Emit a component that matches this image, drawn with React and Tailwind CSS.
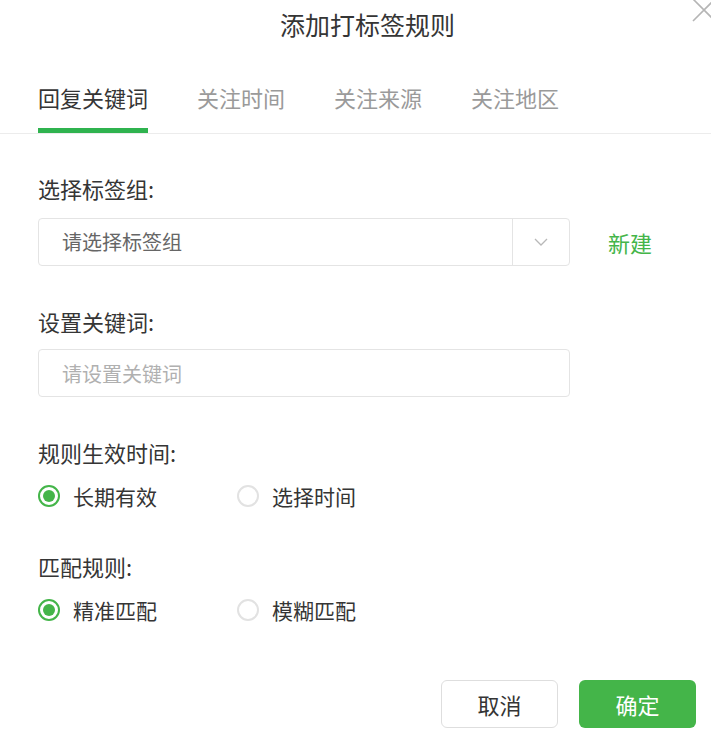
import React, { useState } from 'react';

const tabs = ['回复关键词', '关注时间', '关注来源', '关注地区'];

const Radio = ({ checked, label, onClick, className = '' }) => (
  <button type="button" onClick={onClick} className={`flex items-center gap-[13px] ${className}`}>
    {checked ? (
      <span className="w-[22px] h-[22px] rounded-full border-[2px] border-[#44b549] flex items-center justify-center">
        <span className="w-[12px] h-[12px] rounded-full bg-[#44b549]" />
      </span>
    ) : (
      <span className="w-[22px] h-[22px] rounded-full border-[2px] border-[#e2e2e2]" />
    )}
    <span className="text-[21px] leading-[30px] text-[#353535]">{label}</span>
  </button>
);

const FieldLabel = ({ children, className = '' }) => (
  <div className={`text-[22px] leading-[30px] text-[#353535] ${className}`}>{children}</div>
);

export default function App() {
  const [activeTab, setActiveTab] = useState(0);
  const [period, setPeriod] = useState('forever');
  const [match, setMatch] = useState('exact');

  return (
    <div
      className="relative w-[711px] h-[733px] overflow-hidden bg-white"
      style={{ fontFamily: '"Noto Sans CJK SC", "Noto Sans", sans-serif' }}
    >
      {/* close button, half cut off by the dialog edge */}
      <button type="button" className="absolute left-[692px] top-[-2px] text-[#b5b5b5]">
        <svg width="24" height="24" viewBox="0 0 24 24" fill="none" stroke="currentColor" strokeWidth="1.6">
          <path d="M1 1 L23 23 M23 1 L1 23" />
        </svg>
      </button>

      <div className="h-[50px] flex items-center justify-center pl-[24px] text-[25px] text-[#353535]">
        添加打标签规则
      </div>

      {/* tabs */}
      <div className="flex gap-[49px] px-[38px] border-b border-[#ececec]">
        {tabs.map((t, i) => (
          <button key={t} type="button" onClick={() => setActiveTab(i)} className="flex flex-col items-stretch">
            <span
              className={`mt-[32px] text-[22px] leading-[30px] ${
                activeTab === i ? 'text-[#353535]' : 'text-[#9a9a9a]'
              }`}
            >
              {t}
            </span>
            <span className={`mt-[16px] h-[5px] ${activeTab === i ? 'bg-[#2fb34f]' : 'bg-transparent'}`} />
          </button>
        ))}
      </div>

      <div className="px-[38px]">
        <FieldLabel className="mt-[39px]">选择标签组:</FieldLabel>
        <div className="mt-[15px] flex items-center">
          <div className="w-[532px] h-[48px] flex border border-[#e4e4e4] rounded-[4px]">
            <div className="flex-1 flex items-center pl-[23px] text-[20px] text-[#666]">请选择标签组</div>
            <div className="w-[57px] border-l border-[#e4e4e4] flex items-center justify-center text-[#b8b8b8]">
              <svg width="14" height="8" viewBox="0 0 14 8" fill="none" stroke="currentColor" strokeWidth="1.3">
                <path d="M1 1 L7 7 L13 1" />
              </svg>
            </div>
          </div>
          <button type="button" className="ml-[38px] text-[22px] text-[#44b549]">新建</button>
        </div>

        <FieldLabel className="mt-[40px]">设置关键词:</FieldLabel>
        <input
          placeholder="请设置关键词"
          className="mt-[13px] w-[532px] h-[48px] border border-[#e4e4e4] rounded-[4px] pl-[23px] text-[20px] text-[#353535] placeholder:text-[#b0b0b0] outline-none"
        />

        <FieldLabel className="mt-[40px]">规则生效时间:</FieldLabel>
        <div className="mt-[14px] flex">
          <Radio className="w-[199px]" checked={period === 'forever'} label="长期有效" onClick={() => setPeriod('forever')} />
          <Radio checked={period === 'custom'} label="选择时间" onClick={() => setPeriod('custom')} />
        </div>

        <FieldLabel className="mt-[40px]">匹配规则:</FieldLabel>
        <div className="mt-[14px] flex">
          <Radio className="w-[199px]" checked={match === 'exact'} label="精准匹配" onClick={() => setMatch('exact')} />
          <Radio checked={match === 'fuzzy'} label="模糊匹配" onClick={() => setMatch('fuzzy')} />
        </div>
      </div>

      <div className="mt-[55px] flex justify-end gap-[21px] pr-[15px]">
        <button
          type="button"
          className="w-[117px] h-[48px] rounded-[6px] border border-[#dedede] bg-white text-[22px] text-[#353535]"
        >
          取消
        </button>
        <button type="button" className="w-[117px] h-[48px] rounded-[6px] bg-[#44b549] text-[22px] text-white">
          确定
        </button>
      </div>
    </div>
  );
}
